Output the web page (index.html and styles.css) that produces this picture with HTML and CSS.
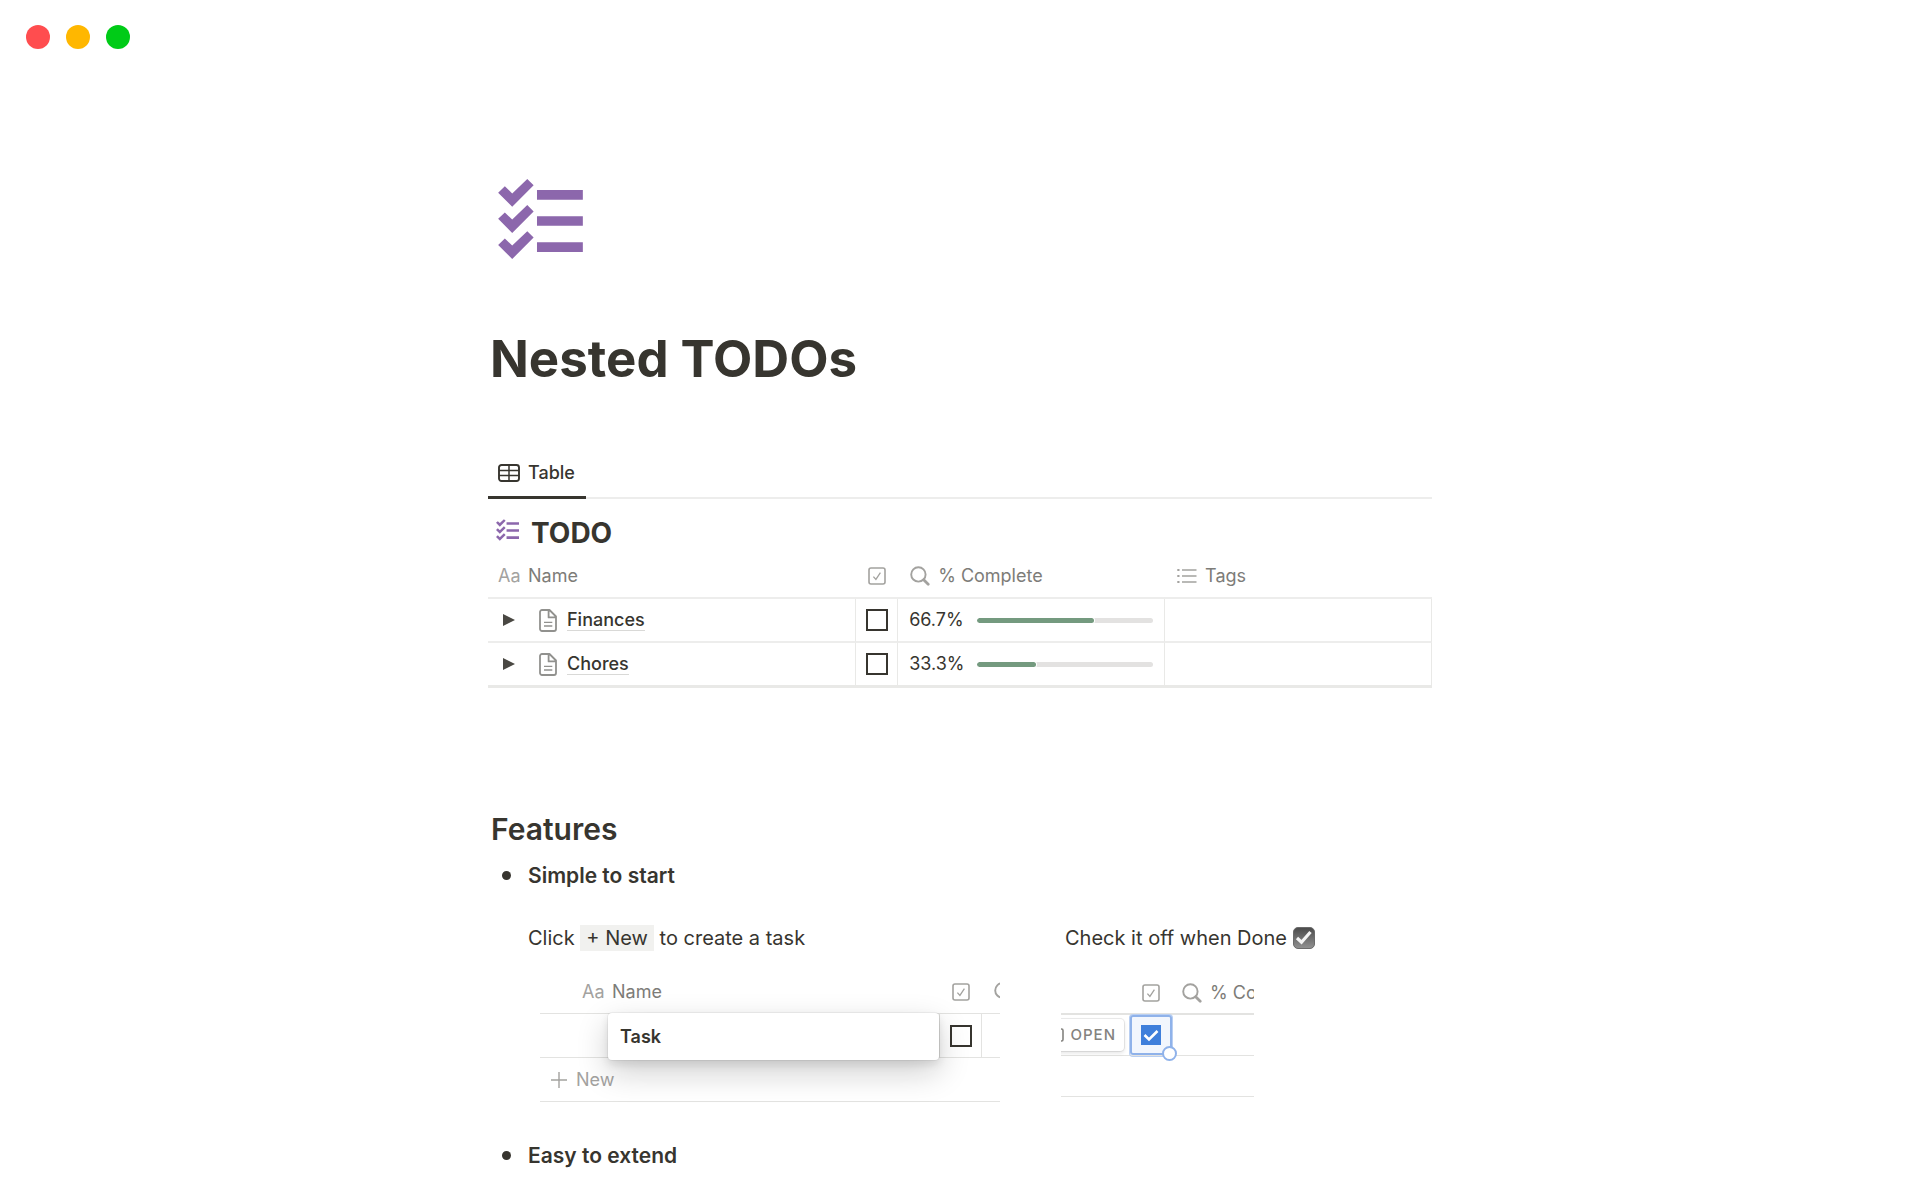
FILE: index.html
```
<!DOCTYPE html>
<html lang="en">
<head>
	<meta charset="utf-8">
	<title>Nested TODOs</title>
	<link rel="stylesheet" href="styles.css">
</head>
<body>

<!-- shared icons -->
<svg class="sprite" aria-hidden="true">
	<symbol id="i-list" viewBox="0 0 253 239">
		<path d="M0 41 20 22 42 43 87 0 106 19 42 83zM116 33H253V62H116zM0 119 20 100 42 121 87 78 106 97 42 161zM116 111H253V140H116zM0 197 20 178 42 199 87 156 106 175 42 239zM116 189H253V218H116z"/>
	</symbol>
	<symbol id="i-check" viewBox="0 0 18 18">
		<rect x="1" y="1" width="16" height="16" rx="2" fill="none" stroke="currentColor" stroke-width="1.6"/>
		<path d="M5.4 9.6 7.9 12.4 12.4 5.6" fill="none" stroke="currentColor" stroke-width="1.3"/>
	</symbol>
	<symbol id="i-search" viewBox="0 0 20 20">
		<circle cx="8.4" cy="8.4" r="7.2" fill="none" stroke="currentColor" stroke-width="1.9"/>
		<path d="M13.7 13.7 18.2 18.2" fill="none" stroke="currentColor" stroke-width="2.8" stroke-linecap="round"/>
	</symbol>
	<symbol id="i-page" viewBox="0 0 18 23">
		<path d="M3 1H10.5L17 7.5V20A2 2 0 0 1 15 22H3A2 2 0 0 1 1 20V3A2 2 0 0 1 3 1ZM9.6 1V8.4H17" fill="none" stroke="currentColor" stroke-width="1.8" stroke-linejoin="round"/>
		<path d="M5 13.3H13.3M5 17H13.3" fill="none" stroke="currentColor" stroke-width="1.3"/>
	</symbol>
</svg>

<div class="dots">
	<span class="dot red"></span>
	<span class="dot yellow"></span>
	<span class="dot green"></span>
</div>

<main class="page">
	<svg class="page-icon"><use href="#i-list"/></svg>
	<h1>Nested TODOs</h1>

	<!-- database -->
	<nav class="tabs">
		<button type="button" class="tab">
			<svg width="22" height="18" viewBox="0 0 22 18" fill="none" stroke="currentColor">
				<rect x="1" y="1" width="20" height="16" rx="2.5" stroke-width="1.9"/>
				<path d="M1 6.4H21M1 11.6H21M11 1V17" stroke-width="1.5"/>
			</svg>
			Table
		</button>
	</nav>

	<h2 class="db-title"><svg class="db-icon"><use href="#i-list"/></svg>TODO</h2>

	<table class="db">
		<colgroup>
			<col class="c-name">
			<col class="c-check">
			<col class="c-prog">
			<col class="c-tags">
		</colgroup>
		<thead>
			<tr>
				<th><div class="head"><span class="aa">Aa</span>Name</div></th>
				<th><div class="head mid"><svg class="ic-check"><use href="#i-check"/></svg></div></th>
				<th><div class="head wide"><svg class="ic-search"><use href="#i-search"/></svg>% Complete</div></th>
				<th><div class="head wide">
					<svg width="20" height="16" viewBox="0 0 20 16" stroke="currentColor" fill="none">
						<path d="M5 2H19.5M5 8H19.5M5 14H19.5" stroke-width="1.6"/>
						<path d="M.3 2H2.5M.3 8H2.5M.3 14H2.5" stroke-width="2.2"/>
					</svg>
					Tags</div></th>
			</tr>
		</thead>
		<tbody>
			<tr>
				<td><div class="name">
					<button type="button" class="toggle" aria-label="Expand Finances"></button>
					<svg class="ic-page"><use href="#i-page"/></svg>
					<a href="#">Finances</a>
				</div></td>
				<td><input type="checkbox" class="box" aria-label="Finances done"></td>
				<td><div class="prog"><span class="value">66.7%</span><span class="track"><span class="fill" style="width:66.7%"></span></span></div></td>
				<td></td>
			</tr>
			<tr>
				<td><div class="name">
					<button type="button" class="toggle" aria-label="Expand Chores"></button>
					<svg class="ic-page"><use href="#i-page"/></svg>
					<a href="#">Chores</a>
				</div></td>
				<td><input type="checkbox" class="box" aria-label="Chores done"></td>
				<td><div class="prog"><span class="value">33.3%</span><span class="track"><span class="fill" style="width:33.3%"></span></span></div></td>
				<td></td>
			</tr>
		</tbody>
	</table>

	<!-- features -->
	<h2 class="features">Features</h2>
	<ul class="list">
		<li>
			<strong>Simple to start</strong>
			<div class="cols">
				<div class="col">
					<p>Click <code>+ New</code> to create a task</p>
					<div class="shot shot-new">
						<table class="mini">
							<colgroup>
								<col class="m-name">
								<col class="c-check">
								<col>
							</colgroup>
							<thead>
								<tr>
									<th><div class="head indent"><span class="aa">Aa</span>Name</div></th>
									<th><div class="head mid"><svg class="ic-check"><use href="#i-check"/></svg></div></th>
									<th><div class="head wide"><svg class="ic-search"><use href="#i-search"/></svg></div></th>
								</tr>
							</thead>
							<tbody>
								<tr>
									<td class="edit"><input type="text" class="task" value="Task" aria-label="Task name"></td>
									<td><input type="checkbox" class="box" aria-label="Task done"></td>
									<td></td>
								</tr>
								<tr>
									<td colspan="3"><button type="button" class="new">
										<svg width="16" height="16" viewBox="0 0 16 16" stroke="currentColor"><path d="M8 0V16M0 8H16" stroke-width="1.4"/></svg>
										New
									</button></td>
								</tr>
							</tbody>
						</table>
					</div>
				</div>
				<div class="col">
					<p class="done-text">Check it off when Done
						<svg class="emoji" viewBox="0 0 22 22">
							<defs>
								<linearGradient id="g" x1="0" y1="0" x2="0" y2="1">
									<stop offset="0" stop-color="#4a4a4a"/>
									<stop offset="1" stop-color="#929292"/>
								</linearGradient>
							</defs>
							<rect x=".5" y=".5" width="21" height="21" rx="4.5" fill="url(#g)" stroke="#6b6b6b"/>
							<path d="M4 11 8.5 15.2 17.5 5" fill="none" stroke="#f4f4f4" stroke-width="3.2"/>
						</svg>
					</p>
					<div class="shot shot-done">
						<table class="mini short">
							<colgroup>
								<col class="m-open">
								<col class="c-check">
								<col>
							</colgroup>
							<thead>
								<tr>
									<th></th>
									<th><div class="head mid"><svg class="ic-check"><use href="#i-check"/></svg></div></th>
									<th><div class="head"><svg class="ic-search"><use href="#i-search"/></svg>% Complete</div></th>
								</tr>
							</thead>
							<tbody>
								<tr>
									<td class="open-cell"><button type="button" class="open">
										<svg width="14" height="14" viewBox="0 0 14 14" fill="none" stroke="currentColor"><rect x="1" y="1" width="12" height="12" rx="1.5" stroke-width="1.6"/><path d="M9.5 1V13" stroke-width="1.6"/></svg>
										OPEN
									</button></td>
									<td class="sel"><input type="checkbox" class="box" checked aria-label="Done"></td>
									<td></td>
								</tr>
								<tr><td colspan="3"></td></tr>
							</tbody>
						</table>
					</div>
				</div>
			</div>
		</li>
		<li><strong>Easy to extend</strong></li>
	</ul>
</main>

</body>
</html>
```
FILE: styles.css
```
* { margin:0; padding:0; box-sizing:border-box;}
body { background:#fff; color:#37352f; font:18px/24px Inter, "Liberation Sans", sans-serif;}
button, input { font:inherit; color:inherit; background:none; border:0;}
svg { flex:none;}
.sprite { display:none;}

.dots { display:flex; gap:16px; padding:25px 26px;}
.dot { width:24px; height:24px; border-radius:50%;}
.red { background:#ff4d4f;}
.yellow { background:#ffb700;}
.green { background:#00cb17;}

.page { max-width:944px; margin:0 auto; padding-top:105px;}
.page-icon { display:block; width:85px; height:80px; margin-left:10px; fill:#8c67ac;}
h1 { margin:69px 0 0 2px; font-size:51px; line-height:62px; font-weight:700;}

/* database */
.tabs { display:flex; margin-top:57px; border-bottom:2px solid #ededec;}
.tab { display:flex; align-items:center; gap:8px; height:52px; padding:2px 11px 0 10px; margin-bottom:-2px; border-bottom:3px solid #37352f; font-weight:500;}
.db-title { display:flex; align-items:center; gap:12px; margin-top:17px; padding-left:8px; font-size:28px; line-height:34px; font-weight:700;}
.db-icon { width:23px; height:22px; margin-bottom:6px; fill:#8c67ac;}

table { width:100%; table-layout:fixed; border-collapse:separate; border-spacing:0;}
th { height:49px; padding-top:4px; border-bottom:2px solid #ededec; font-weight:400; text-align:left;}
td { height:44px; border-bottom:2px solid #ededec; border-right:1px solid #e9e9e7;}
.c-name { width:39%;}
.c-check { width:42px;}
.head { display:flex; align-items:center; gap:8px; padding-left:10px; color:#7d7c78; white-space:nowrap;}
.head.wide { padding-left:12px;}
.head.mid { justify-content:center; padding:0;}
.head svg { color:#a3a29f;}
.aa { width:22px; color:#a3a29f;}
.ic-check { width:18px; height:18px;}
.ic-search { width:20px; height:20px;}
.db tbody tr:last-child td { height:45px; border-bottom-width:3px; border-bottom-color:#e9e9e7;}

.name { display:flex; align-items:center; padding-left:15px;}
.toggle { width:0; height:0; margin-right:24px; border:6px solid transparent; border-left:12px solid #4a4843; border-right:0;}
.ic-page { width:18px; height:23px; margin-right:10px; color:#91918e;}
.name a { color:inherit; font-weight:500; line-height:21px; text-decoration:none; border-bottom:1px solid #d9d9d7;}
.box { display:block; width:22px; height:22px; margin:0 auto; border:2px solid #37352f; appearance:none;}
.prog { display:flex; align-items:center; gap:10px; padding:0 11px;}
.value { width:58px;}
.track { flex:1; height:5px; border-radius:3px; background:#e3e2e1; overflow:hidden;}
.fill { display:block; height:5px; border-radius:3px; background:#749a7f; box-shadow:0 0 0 1px #fff;}

/* features */
.features { margin:122px 0 0 3px; font-size:30px; line-height:38px; font-weight:600;}
.list { list-style:none;}
.list li { position:relative; padding-left:40px;}
.list li::before { content:""; position:absolute; left:14px; top:23px; width:9px; height:9px; border-radius:50%; background:#37352f;}
.list strong { display:block; padding-top:14px; font-size:21px; line-height:28px; font-weight:600;}
.cols { display:grid; grid-template-columns:472fr 371fr; gap:61px; margin:32px 0 14px;}
.col { min-width:0;}
.cols p { font-size:20px; line-height:32px; white-space:nowrap;}
.cols .done-text { padding-left:4px;}
.cols code { padding:1px 6px; font:inherit; background:#f1f1ef;}
.emoji { width:22px; height:22px; vertical-align:-4px;}

/* small tables cut off at the right edge */
.shot { overflow:hidden;}
.shot-new { margin:16px 0 0 12px; height:144px;}
.shot-done { width:52%; margin-top:18px;}
.mini { width:600px;}
.mini th { height:44px; padding:0; border-bottom-width:1px; border-color:#e3e3e1;}
.mini td { height:44px; border-width:0 1px 1px 0; border-color:#e3e3e1;}
.m-name { width:400px;}
.m-open { width:69px;}
.indent { padding-left:42px;}
.edit { position:relative;}
.task { position:absolute; left:68px; top:-1px; width:331px; height:47px; padding:0 12px; border-radius:4px; background:#fff; font-weight:600; box-shadow:0 0 0 1px rgba(15,15,15,0.05), 0 4px 8px rgba(15,15,15,0.1), 0 12px 32px rgba(15,15,15,0.2);}
.new { display:flex; align-items:center; gap:9px; padding-left:11px; color:#a3a29f;}

.short th { height:43px; border-bottom-width:2px;}
.short td { height:41px; border-right:0;}
.open-cell { position:relative;}
.open { position:absolute; right:6px; top:4px; display:flex; align-items:center; gap:6px; height:32px; padding:0 8px; border-radius:4px; background:#fff; color:#84837f; font-size:15px; font-weight:500; box-shadow:0 0 0 1px rgba(15,15,15,0.08), 0 2px 4px rgba(15,15,15,0.12); letter-spacing:1px;}
.sel { position:relative; background:#f2f6fd; box-shadow:inset 0 0 0 2px #8fb2ea, 0 0 0 1px #b9cff2; border-radius:3px;}
.sel::after { content:""; position:absolute; right:-5px; bottom:-6px; width:11px; height:11px; border:2px solid #8fb2ea; border-radius:50%; background:#fff; z-index:1;}
.box:checked { width:20px; height:20px; border:0; background:#3f7fdb url('data:image/svg+xml,<svg xmlns="http://www.w3.org/2000/svg" viewBox="0 0 20 20"><path d="M3.5 10 8 14.5 16.5 6" fill="none" stroke="white" stroke-width="2.6"/></svg>');}
```
